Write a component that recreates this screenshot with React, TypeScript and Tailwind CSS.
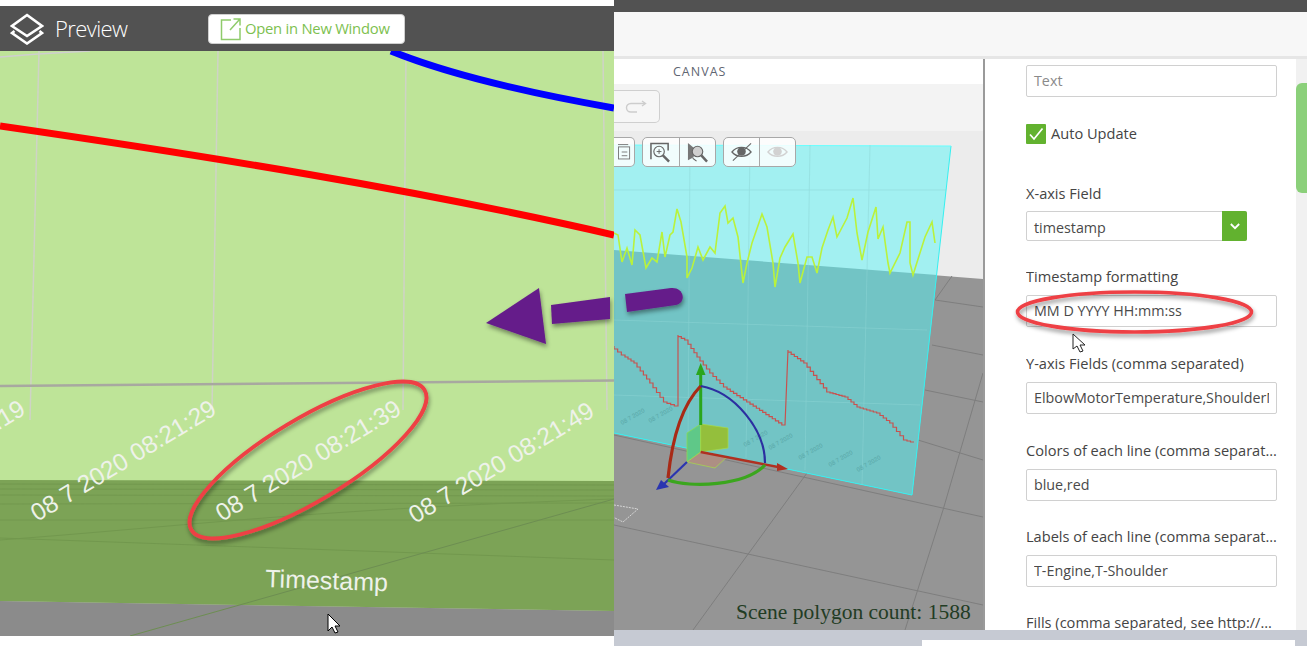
import { ReactNode } from "react";

const sans = "font-['Open_Sans',sans-serif]";

const greenLine =
  "614,233 618,235 622,262 627,248 632,265 635,230 640,235 646,268 652,258 657,262 662,232 665,257 670,235 673,232 677,209 681,222 687,257 687,278 692,268 698,247 703,260 710,247 715,253 720,213 725,206 728,223 733,218 738,237 743,283 747,263 752,243 762,214 767,227 773,263 775,287 780,258 785,247 793,234 798,263 800,283 807,257 812,257 817,273 822,248 828,230 833,217 837,237 847,218 853,198 857,233 862,260 868,232 876,207 878,239 883,227 888,263 890,273 900,253 907,222 910,222 910,263 913,275 925,237 932,222 935,243";

const redPoints = [
  [614, 346], [625, 355], [637, 363], [653, 383], [667, 402], [678, 406], [678, 335], [688, 340], [700, 357],
  [713, 373], [727, 387], [750, 402], [785, 425], [788, 350], [807, 363], [830, 392], [848, 397], [860, 407],
  [880, 413], [893, 423], [907, 440], [914, 442],
];

// the temperature trace goes down in small steps
const stairs = (pts: number[][]) => {
  const out: string[] = [];
  pts.forEach(([x, y], i) => {
    if (i === 0) return void out.push(`${x},${y}`);
    const [px, py] = pts[i - 1];
    if (y < py || x - px < 3) return void out.push(`${x},${y}`);
    const n = Math.floor((x - px) / 3);
    for (let s = 1; s <= n; s++) {
      const sx = px + ((x - px) * s) / n;
      const sy = py + ((y - py) * s) / n;
      out.push(`${sx - (x - px) / n},${sy}`, `${sx},${sy}`);
    }
  });
  return out.join(" ");
};

const LeftChart = () => (
  <svg viewBox="0 51 614 585" className="block w-[614px] h-[585px]">
    <rect x="0" y="51" width="614" height="585" fill="#bee498" />
    <path d="M0 57 L38 54 L90 51" stroke="#cfcfcf" strokeWidth="1.5" fill="none" />
    <g stroke="#cfd3c6" strokeWidth="1.5">
      <line x1="39" y1="51" x2="30" y2="420" />
      <line x1="218" y1="51" x2="212" y2="410" />
      <line x1="406" y1="51" x2="403" y2="410" />
      <line x1="603" y1="51" x2="607" y2="410" />
    </g>
    <path d="M0 386 L614 380.5" stroke="#a8a8a0" strokeWidth="2.5" />
    <path d="M391 51 C 450 75, 540 95, 614 108" stroke="#0000ff" strokeWidth="7" fill="none" />
    <path d="M0 126 C 200 155, 420 190, 614 235" stroke="#ff0000" strokeWidth="7" fill="none" />
    <polygon points="0,480 614,481 614,611 0,601" fill="#7ca356" />
    <g stroke="#72984e" strokeWidth="1" fill="none">
      <path d="M0 484 L614 485" />
      <path d="M0 489 L614 490" />
      <path d="M0 495 L614 496" />
      <path d="M0 504 L614 503" />
      <path d="M0 520 L614 520" />
      <path d="M0 540 C 200 525, 300 510, 614 499" />
      <path d="M0 538 L614 560" />
    </g>
    <polygon points="0,601 614,611 614,636 0,636" fill="#8b8b8b" />
    <path d="M130 636 L614 499" stroke="#6d8e52" strokeWidth="1" fill="none" />
    <g fontFamily="'Liberation Sans', sans-serif" fontSize="24.5" fill="#eef2ea">
      <text transform="translate(-154 522) rotate(-31)">08 7 2020 08:21:19</text>
      <text transform="translate(37 522) rotate(-31)">08 7 2020 08:21:29</text>
      <text transform="translate(222 522) rotate(-31)">08 7 2020 08:21:39</text>
      <text transform="translate(415 524) rotate(-31)">08 7 2020 08:21:49</text>
      <text transform="translate(265 587) rotate(2)" fontSize="25">Timestamp</text>
    </g>
  </svg>
);

const PreviewHeader = () => (
  <div className="h-[45px] bg-[#525252] flex items-center pl-[10px]">
    <svg viewBox="0 0 34 32" className="w-[34px] h-[32px]" fill="none" stroke="#fff" strokeWidth="2.6">
      <polygon points="17,2 32,13 17,23 2,13" />
      <path d="M4.5 18 L2 20 L17 30.5 L32 20 L29.5 18" />
    </svg>
    <span className={`ml-[11px] w-[153px] text-[22px] font-light tracking-[-0.6px] text-white ${sans}`}>Preview</span>
    <button className="h-[30px] w-[197px] flex items-center pl-[11px] bg-white rounded-[4px] border border-[#cfcfcf]">
      <svg viewBox="0 0 22 24" className="w-[22px] h-[24px]" fill="none" stroke="#8fcb6b" strokeWidth="1.5">
        <path d="M11 3 H1.5 V22.5 H20 V11" />
        <path d="M10 13 L19.5 2.5 M13.5 2 H20 V8.5" />
      </svg>
      <span className={`ml-[3px] text-[14.8px] tracking-[-0.25px] text-[#7dbf4f] ${sans}`}>Open in New Window</span>
    </button>
  </div>
);

const Scene = () => (
  <svg viewBox="614 131 369 499" className="block w-[369px] h-[499px]">
    <rect x="614" y="131" width="369" height="499" fill="#ececec" />
    <polygon points="614,250 983,279 983,630 614,630" fill="#959595" />
    <g stroke="#7e7e7e" strokeWidth="1" fill="none">
      <path d="M614 435 L983 517" />
      <path d="M614 525 L983 605" />
      <path d="M693 630 L807 473" />
      <path d="M905 630 L943 510 L983 373" />
      <path d="M935 300 L983 307" />
      <path d="M932 345 L983 355" />
      <path d="M925 390 L983 402" />
      <path d="M918 440 L983 460" />
      <path d="M935 300 L952 276" />
    </g>
    <polygon points="614,145 951,146 912,495 614,433" fill="#a2f0f1" />
    <polygon points="614,250 937,275 912,495 614,433" fill="#72c4c5" />
    <path d="M951 146 L912 495 L614 433" stroke="#35f0f0" strokeWidth="1" fill="none" />
    <path d="M614 145 L951 146" stroke="#6ff" strokeWidth="1" fill="none" />
    <g stroke="#8ed5d6" strokeWidth="0.7" opacity="0.7">
      <line x1="690" y1="145" x2="688" y2="445" />
      <line x1="750" y1="145" x2="746" y2="458" />
      <line x1="810" y1="145" x2="805" y2="470" />
      <line x1="870" y1="145" x2="862" y2="485" />
      <line x1="614" y1="190" x2="946" y2="190" />
      <line x1="614" y1="320" x2="927" y2="330" />
      <line x1="614" y1="395" x2="920" y2="405" />
    </g>
    <g fontFamily="'Liberation Sans', sans-serif" fontSize="6" fill="#4f9a9b" opacity="0.7">
      <text transform="translate(622 425) rotate(-30)">08 7 2020</text>
      <text transform="translate(650 423) rotate(-30)">08 7 2020</text>
      <text transform="translate(745 447) rotate(-30)">08 7 2020</text>
      <text transform="translate(770 450) rotate(-30)">08 7 2020</text>
      <text transform="translate(800 460) rotate(-30)">08 7 2020</text>
      <text transform="translate(830 467) rotate(-30)">08 7 2020</text>
      <text transform="translate(858 472) rotate(-30)">08 7 2020</text>
    </g>
    <polyline points={greenLine} fill="none" stroke="#b9f23c" strokeWidth="1.6" />
    <polyline points={stairs(redPoints)} fill="none" stroke="#c7524f" strokeWidth="1.2" />

    {/* transform gizmo */}
    <polygon points="687,433 700.7,424 700.7,452 687,462" fill="#5fc888" stroke="#8fe04a" strokeWidth="0.7" />
    <polygon points="700.7,424 728,428 728,448 700.7,452" fill="#94bf3c" stroke="#a6dc48" strokeWidth="0.7" />
    <polygon points="700.7,452 727,457 715,468 687,462" fill="#ad8f84" stroke="#a6dc48" strokeWidth="0.7" />
    <line x1="700.7" y1="425" x2="700.7" y2="372" stroke="#2aa61c" strokeWidth="3" />
    <polygon points="700.7,363 696,375 705.5,375" fill="#2aa61c" />
    <line x1="700.7" y1="452" x2="778" y2="467" stroke="#b03020" strokeWidth="2.4" />
    <polygon points="788,469 777,463 777,471" fill="#b03020" />
    <line x1="687" y1="462" x2="664" y2="484" stroke="#2a35b0" strokeWidth="2.2" />
    <polygon points="656,490 661,480 669,487" fill="#2a35b0" />
    <path d="M668 478 C 672 440, 682 405, 700.7 386" fill="none" stroke="#a82a16" strokeWidth="3.2" />
    <path d="M700.7 386 C 735 392, 765 430, 765 463" fill="none" stroke="#2c2fa0" strokeWidth="2.2" />
    <path d="M668 480 C 690 488, 745 486, 765 465" fill="none" stroke="#3ba61e" strokeWidth="3.2" />
    <polygon points="614,505 638,509 623,522 611,516" fill="none" stroke="#e6e6e6" strokeWidth="0.8" strokeDasharray="2 1" />

    <text x="736" y="619" fontFamily="'Liberation Serif', serif" fontSize="21.5" fill="#223c24">
      Scene polygon count: 1588
    </text>
  </svg>
);

const ToolButton = ({ children, last }: { children: ReactNode; last?: boolean }) => (
  <div className={`flex-1 h-full flex items-center justify-center ${last ? "" : "border-r border-[#a8a8a8]"}`}>
    {children}
  </div>
);

const CanvasPane = () => (
  <div className="w-[369px] flex flex-col">
    <div className={`h-[25px] bg-white pl-[59px] pt-[4px] text-[12.5px] tracking-[1px] text-[#5f6672] ${sans}`}>CANVAS</div>
    <div className="h-[47px] bg-[#f3f3f3] pt-[6px]">
      <div className="w-[46px] h-[33px] bg-[#f6f6f6] border border-[#cfcfcf] rounded-r-[5px] border-l-0 flex items-center justify-end pr-[12px]">
        <svg viewBox="0 0 22 14" className="w-[22px] h-[14px]" fill="none" stroke="#cdcdcd" strokeWidth="1.4">
          <path d="M20 3.5 H6 C 0 3.5, 0 12, 6 12 H12" />
          <path d="M17 1 L20.5 3.5 L17 6" />
        </svg>
      </div>
    </div>
    <div className="relative">
      <Scene />
      <div className="absolute left-0 top-[6px] flex h-[30px] gap-[7px]">
        <div className="w-[21px] h-full bg-white/85 border border-l-0 border-[#a8a8a8] rounded-r-[5px] flex items-center justify-end pr-[3px]">
          <svg viewBox="0 0 14 18" className="w-[13px] h-[18px]" fill="none" stroke="#777" strokeWidth="1">
            <rect x="0.5" y="3.5" width="12" height="13" />
            <path d="M0 1 H11 M4 9 H10 M4 13 H10" />
          </svg>
        </div>
        <div className="flex w-[74px] h-full bg-white/85 border border-[#a8a8a8] rounded-[5px]">
          <ToolButton>
            <svg viewBox="0 0 22 22" className="w-[21px] h-[21px]" fill="none" stroke="#666">
              <path d="M1 18 V1.5 H19 V9" strokeWidth="1.6" />
              <circle cx="9.5" cy="10" r="5.5" strokeWidth="1.2" />
              <path d="M7 10 H12 M9.5 7.5 V12.5" strokeWidth="1" />
              <path d="M13.5 14 L20 20.5" strokeWidth="2.6" />
            </svg>
          </ToolButton>
          <ToolButton last>
            <svg viewBox="0 0 22 22" className="w-[21px] h-[21px]" fill="none" stroke="#666">
              <path d="M1 1 L7 6 V16 L1 19 Z" fill="#777" stroke="none" />
              <circle cx="11" cy="10" r="5.5" strokeWidth="1.2" fill="#cfcfcf" />
              <path d="M15 14 L21 20.5" strokeWidth="2.6" />
              <path d="M6 17 L10 20" strokeWidth="1.2" />
            </svg>
          </ToolButton>
        </div>
        <div className="flex w-[73px] h-full bg-white/85 border border-[#a8a8a8] rounded-[5px]">
          <ToolButton>
            <svg viewBox="0 0 22 20" className="w-[21px] h-[20px]" fill="none" stroke="#666">
              <path d="M1 10 C 6 3.5, 16 3.5, 21 10 C 16 16, 6 16, 1 10 Z" strokeWidth="1.3" />
              <circle cx="11" cy="9.5" r="4.5" fill="#666" stroke="none" />
              <path d="M2 19 L21 1" strokeWidth="1.2" />
            </svg>
          </ToolButton>
          <ToolButton last>
            <svg viewBox="0 0 22 20" className="w-[21px] h-[20px]" fill="none" stroke="#d2d2d2">
              <path d="M1 10 C 6 3.5, 16 3.5, 21 10 C 16 16, 6 16, 1 10 Z" strokeWidth="1.4" />
              <circle cx="11" cy="9.5" r="4.5" fill="#d2d2d2" stroke="none" />
            </svg>
          </ToolButton>
        </div>
      </div>
    </div>
  </div>
);

const inputClass =
  "w-[251px] h-[32px] px-[7px] bg-white border border-[#d0d0d0] rounded-[2px] flex items-center whitespace-nowrap text-[14.3px] text-[#4a4a4a]";

const Field = ({ label, value, cls }: { label: string; value?: string; cls: string }) => (
  <div className={cls}>
    <div className="w-[251px] h-[20px] mb-[7px] truncate text-[14.6px] leading-[17px] text-[#444]">{label}</div>
    {value && (
      <div className={inputClass}>
        <span className="block w-full overflow-hidden">{value}</span>
      </div>
    )}
  </div>
);

const SidePanel = () => (
  <div className={`flex-1 flex bg-white overflow-hidden ${sans}`}>
    <div className="w-[311px] pl-[41px] pt-[6px]">
      <div className={`${inputClass} text-[#8a8a8a]`}>Text</div>
      <div className="mt-[27px] flex items-center h-[20px]">
        <div className="w-[20px] h-[20px] bg-[#62b22f] rounded-[1px] flex items-center justify-center">
          <svg viewBox="0 0 20 20" className="w-[20px] h-[20px]" fill="none" stroke="#fff" strokeWidth="1.7">
            <path d="M4 10.5 L8 15 L16.5 4.5" />
          </svg>
        </div>
        <span className="ml-[5px] text-[14.6px] font-medium text-[#444]">Auto Update</span>
      </div>
      <div className="mt-[40px] h-[20px] mb-[7px] text-[14.6px] leading-[18px] text-[#444]">X-axis Field</div>
      <div className="w-[221px] h-[30px] flex bg-white border border-[#d0d0d0] rounded-[2px]">
        <div className="flex-1 pl-[7px] pt-[3px] flex items-center text-[14.3px] text-[#4a4a4a]">timestamp</div>
        <div className="w-[25px] -my-px -mr-px bg-[#62b22f] rounded-r-[2px] flex items-center justify-center">
          <svg viewBox="0 0 12 8" className="w-[10px] h-[7px]" fill="none" stroke="#fff" strokeWidth="2.2">
            <path d="M1 1 L6 6 L11 1" />
          </svg>
        </div>
      </div>
      <Field cls="mt-[27px]" label="Timestamp formatting" value="MM D YYYY HH:mm:ss" />
      <Field cls="mt-[28px]" label="Y-axis Fields (comma separated)" value="ElbowMotorTemperature,ShoulderMotorTemperature" />
      <Field cls="mt-[28px]" label="Colors of each line (comma separated)" value="blue,red" />
      <Field cls="mt-[27px]" label="Labels of each line (comma separated)" value="T-Engine,T-Shoulder" />
      <Field cls="mt-[27px]" label="Fills (comma separated, see http://www.example)" />
    </div>
    <div className="flex-1 bg-[#f1f1f1] pt-[24px]">
      <div className="h-[110px] bg-[#8bd07a] rounded-l-[6px]" />
    </div>
  </div>
);

const Annotations = () => (
  <svg viewBox="0 0 1307 646" className="absolute inset-0 w-[1307px] h-[646px] pointer-events-none">
    <defs>
      <filter id="soft" x="-20%" y="-40%" width="140%" height="180%">
        <feDropShadow dx="1" dy="3" stdDeviation="2" floodColor="#000" floodOpacity="0.4" />
      </filter>
    </defs>
    <g filter="url(#soft)">
      <ellipse cx="308" cy="460" rx="136" ry="41" transform="rotate(-31 308 460)" fill="none" stroke="#ee4044" strokeWidth="3.8" />
      <ellipse cx="1134.5" cy="312" rx="117" ry="20" fill="none" stroke="#ee4044" strokeWidth="3.6" />
      <polygon points="486,323 539,288 546,344" fill="#651d8a" />
      <polygon points="551,305 610,297 610,319 552,324" fill="#651d8a" />
      <path d="M625 294 L671 288 C 684 287, 687 302, 676 305 L627 312 Z" fill="#651d8a" />
    </g>
    <path d="M328 614 L328 631 L332 627 L335 633 L338 632 L335 626 L340 626 Z" fill="#fff" stroke="#000" strokeWidth="1" />
    <path d="M1073 334 L1073 349 L1077 346 L1080 352 L1083 351 L1080 345 L1085 345 Z" fill="#fff" stroke="#222" strokeWidth="1" />
  </svg>
);

export default function App() {
  return (
    <div className="relative w-[1307px] h-[646px] overflow-hidden bg-white flex">
      <div className="w-[614px] pt-[6px]">
        <PreviewHeader />
        <LeftChart />
      </div>
      <div className="flex-1 flex flex-col">
        <div className="h-[12px] bg-[#525252]" />
        <div className="h-[44px] bg-[#f7f7f7]" />
        <div className="h-[3px] bg-[#e6e6e6]" />
        <div className="h-[571px] flex">
          <CanvasPane />
          <div className="w-[2px] bg-[#9a9a9a]" />
          <SidePanel />
        </div>
        <div className="flex-1 bg-[#c6cad3] pt-[10px] pl-[308px] pr-[12px]">
          <div className="h-full bg-white" />
        </div>
      </div>
      <Annotations />
    </div>
  );
}
